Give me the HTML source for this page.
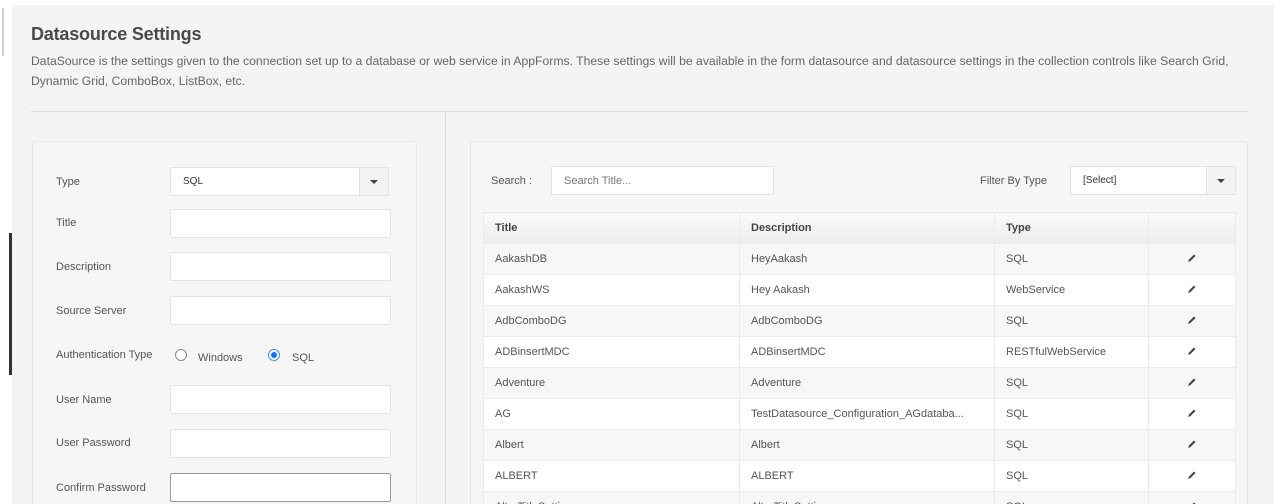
<!DOCTYPE html>
<html style="height:504px;overflow:hidden"><head><style>
*{box-sizing:border-box;margin:0;padding:0}
html,body{width:1274px;height:504px;overflow:hidden}
body{background:#fff;font-family:"Liberation Sans",sans-serif;color:#555;position:relative}
.bg{position:absolute;left:12px;top:5px;right:0;bottom:0;background:#f4f4f4}
.lbar{position:absolute;left:2px;top:8px;width:2px;height:48px;background:#ccc}
.dbar{position:absolute;left:9px;top:233px;width:3px;height:142px;background:#333}
h1{position:absolute;left:31px;top:24px;font-size:18px;color:#4a4a4a;font-weight:bold;letter-spacing:-0.2px}
.desc{position:absolute;left:31px;top:51px;width:1240px;font-size:12.2px;line-height:20px;color:#666;white-space:nowrap}
.hr{position:absolute;left:31px;top:111px;width:1217px;height:1px;background:#ddd}
.vr{position:absolute;left:445px;top:112px;width:1px;height:392px;background:#ddd}
.card{position:absolute;background:#f6f6f6;border:1px solid #e6e6e6;border-radius:3px}
.lab{position:absolute;font-size:11px;color:#555}
.inp{position:absolute;background:#fff;border:1px solid #e3e3e3;border-radius:2px;height:29px;font-size:10px;padding:8px 12px;color:#333}
.arr{position:absolute;right:0;top:0;width:29px;height:100%;border-left:1px solid #e3e3e3;background:#f3f3f3}
.arr:after{content:"";position:absolute;left:10px;top:12px;border:4px solid transparent;border-top:4px solid #444}
.radio{position:absolute;width:12px;height:12px;border:1px solid #888;border-radius:50%;background:#fff}
.radio.on{border-color:#4a90e2}
.radio.on:after{content:"";position:absolute;left:2px;top:2px;width:6px;height:6px;border-radius:50%;background:#1a73e8}
table{position:absolute;left:483px;top:212px;width:753px;border-collapse:collapse;font-size:11px;background:#fff}
td,th{height:31px;border:1px solid #eaeaea;padding:0 11px;text-align:left;color:#555;font-weight:normal}
th{background:linear-gradient(#fafafa,#ececec);font-weight:bold;color:#444}
tr:nth-child(even) td{background:#f7f7f7}
td.e{text-align:center}
</style></head><body>
<div class="bg"></div><div class="lbar"></div><div class="dbar"></div>
<h1>Datasource Settings</h1>
<div class="desc">DataSource is the settings given to the connection set up to a database or web service in AppForms. These settings will be available in the form datasource and datasource settings in the collection controls like Search Grid,<br>Dynamic Grid, ComboBox, ListBox, etc.</div>
<div class="hr"></div><div class="vr"></div>
<div class="card" style="left:32px;top:141px;width:385px;height:380px"></div>
<div class="lab" style="left:56px;top:176px">Type</div>
<div class="inp" style="left:170px;top:167px;width:219px">SQL<div class="arr"></div></div>
<div class="lab" style="left:56px;top:217px">Title</div>
<div class="inp" style="left:170px;top:209px;width:221px"></div>
<div class="lab" style="left:56px;top:261px">Description</div>
<div class="inp" style="left:170px;top:252px;width:221px"></div>
<div class="lab" style="left:56px;top:305px">Source Server</div>
<div class="inp" style="left:170px;top:296px;width:221px"></div>
<div class="lab" style="left:56px;top:349px">Authentication Type</div>
<div class="radio" style="left:175px;top:349px"></div><div class="lab" style="left:198px;top:352px">Windows</div>
<div class="radio on" style="left:268px;top:349px"></div><div class="lab" style="left:292px;top:352px">SQL</div>
<div class="lab" style="left:56px;top:394px">User Name</div>
<div class="inp" style="left:170px;top:385px;width:221px"></div>
<div class="lab" style="left:56px;top:437px">User Password</div>
<div class="inp" style="left:170px;top:429px;width:221px"></div>
<div class="lab" style="left:56px;top:482px">Confirm Password</div>
<div class="inp" style="left:170px;top:473px;width:221px;border-color:#999"></div>
<div class="card" style="left:470px;top:141px;width:778px;height:380px"></div>
<div class="lab" style="left:491px;top:175px">Search :</div>
<div class="inp" style="left:551px;top:166px;width:223px;color:#777;font-size:11px">Search Title...</div>
<div class="lab" style="left:980px;top:175px">Filter By Type</div>
<div class="inp" style="left:1070px;top:166px;width:166px">[Select]<div class="arr"></div></div>
<table>
<tr><th style="width:256px">Title</th><th style="width:255px">Description</th><th style="width:154px">Type</th><th></th></tr>
<tr><td>AakashDB</td><td>HeyAakash</td><td>SQL</td><td class="e"><svg width="10" height="10" viewBox="0 0 10 10"><path d="M1 9 L2 6.5 L7 1.5 L8.5 3 L3.5 8 Z" fill="#444"/></svg></td></tr>
<tr><td>AakashWS</td><td>Hey Aakash</td><td>WebService</td><td class="e"><svg width="10" height="10" viewBox="0 0 10 10"><path d="M1 9 L2 6.5 L7 1.5 L8.5 3 L3.5 8 Z" fill="#444"/></svg></td></tr>
<tr><td>AdbComboDG</td><td>AdbComboDG</td><td>SQL</td><td class="e"><svg width="10" height="10" viewBox="0 0 10 10"><path d="M1 9 L2 6.5 L7 1.5 L8.5 3 L3.5 8 Z" fill="#444"/></svg></td></tr>
<tr><td>ADBinsertMDC</td><td>ADBinsertMDC</td><td>RESTfulWebService</td><td class="e"><svg width="10" height="10" viewBox="0 0 10 10"><path d="M1 9 L2 6.5 L7 1.5 L8.5 3 L3.5 8 Z" fill="#444"/></svg></td></tr>
<tr><td>Adventure</td><td>Adventure</td><td>SQL</td><td class="e"><svg width="10" height="10" viewBox="0 0 10 10"><path d="M1 9 L2 6.5 L7 1.5 L8.5 3 L3.5 8 Z" fill="#444"/></svg></td></tr>
<tr><td>AG</td><td>TestDatasource_Configuration_AGdataba...</td><td>SQL</td><td class="e"><svg width="10" height="10" viewBox="0 0 10 10"><path d="M1 9 L2 6.5 L7 1.5 L8.5 3 L3.5 8 Z" fill="#444"/></svg></td></tr>
<tr><td>Albert</td><td>Albert</td><td>SQL</td><td class="e"><svg width="10" height="10" viewBox="0 0 10 10"><path d="M1 9 L2 6.5 L7 1.5 L8.5 3 L3.5 8 Z" fill="#444"/></svg></td></tr>
<tr><td>ALBERT</td><td>ALBERT</td><td>SQL</td><td class="e"><svg width="10" height="10" viewBox="0 0 10 10"><path d="M1 9 L2 6.5 L7 1.5 L8.5 3 L3.5 8 Z" fill="#444"/></svg></td></tr>
<tr><td>AlterTitleSetting</td><td>AlterTitleSetting</td><td>SQL</td><td class="e"><svg width="10" height="10" viewBox="0 0 10 10"><path d="M1 9 L2 6.5 L7 1.5 L8.5 3 L3.5 8 Z" fill="#444"/></svg></td></tr>
</table>
</body></html>
